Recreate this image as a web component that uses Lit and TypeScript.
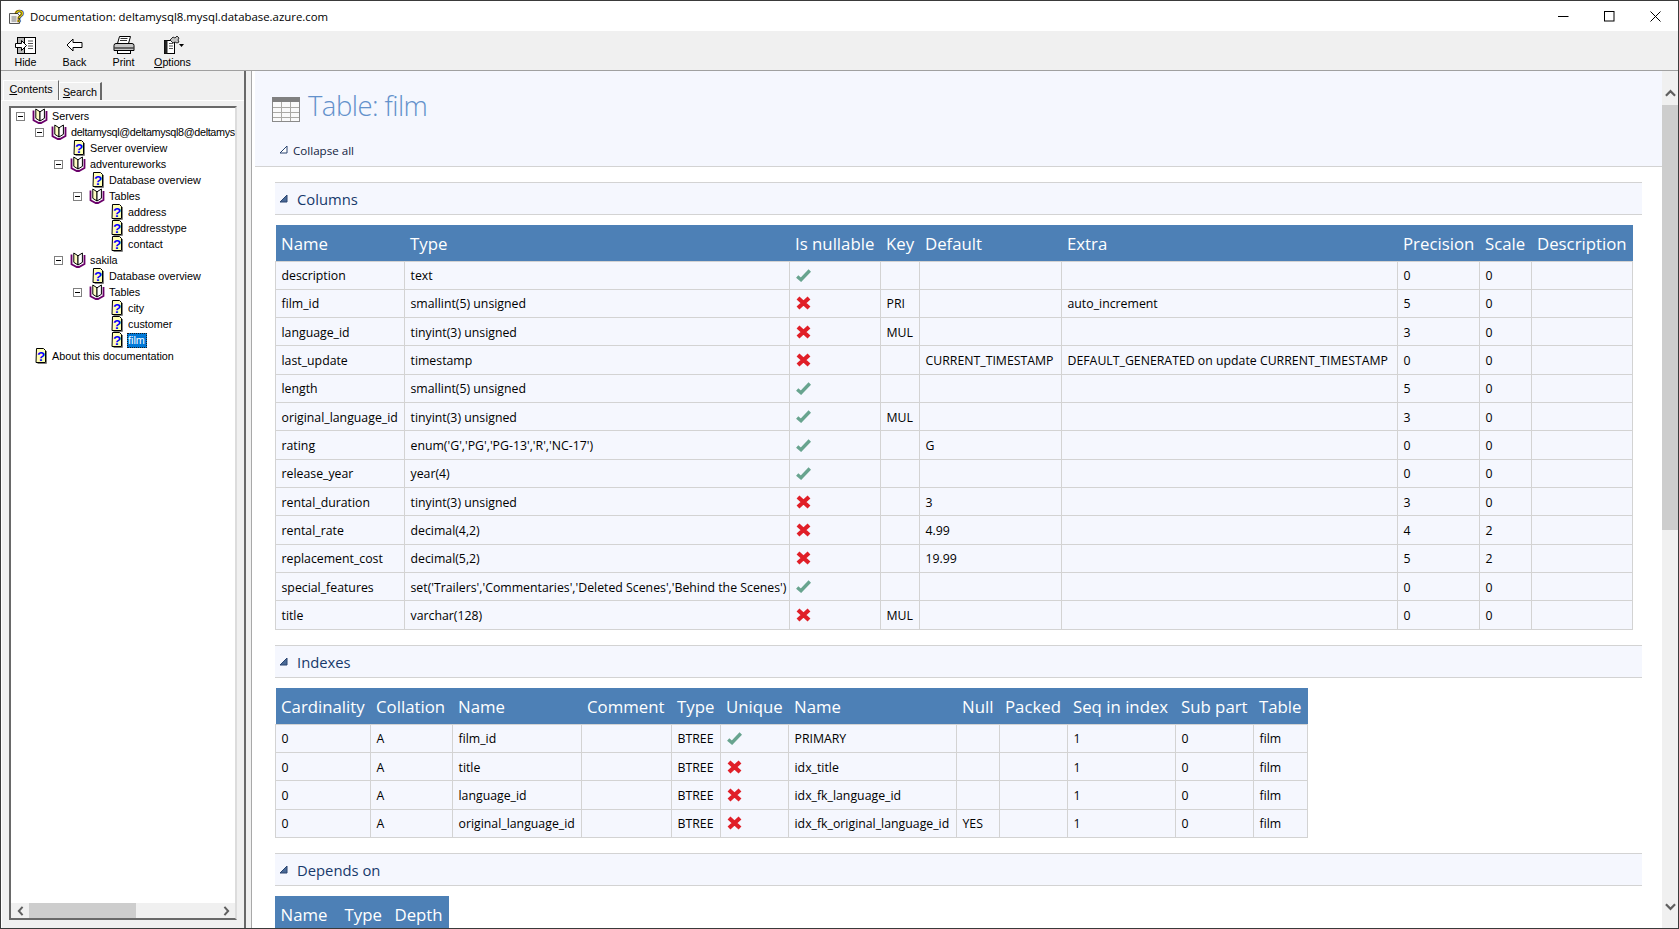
import { LitElement, html, css } from "lit";
import { customElement } from "lit/decorators.js";

const bookIcon = html`<svg class="ic16" viewBox="0 0 16 16" width="16" height="16">
  <path d="M1.500 2.500V12.200L6.800 15H9L14.500 12V3" fill="none" stroke="#6a006a" stroke-width="1.800"/>
  <path d="M3.800 1L8 3.800V13L3.800 10.300Z" fill="#ffffc4" stroke="#000" stroke-width="1"/>
  <path d="M8 3.800L12.400 1V10.300L8 13Z" fill="#fff" stroke="#000" stroke-width="1"/>
</svg>`;

const helpIcon = html`<svg class="ic16" viewBox="0 0 16 16" width="16" height="16">
  <path d="M4.500 .5h7l2 2v12h-9.500z" fill="#ffffb4" stroke="#000" stroke-width="1"/>
  <path d="M14.500 3v12.500h-9" fill="none" stroke="#808080" stroke-width="1"/>
  <text x="9" y="12.500" text-anchor="middle" font-family="Liberation Sans" font-weight="700" font-size="13.500" fill="#0000ff">?</text>
</svg>`;

const expander = html`<svg class="exp" viewBox="0 0 9 9" width="9" height="9">
  <rect x=".5" y=".5" width="8" height="8" fill="#fff" stroke="#808080"/>
  <path d="M2 4.500h5" stroke="#000" stroke-width="1"/>
</svg>`;

const check = html`<svg class="state" viewBox="0 0 15 13" width="15" height="13">
  <path d="M1.200 7.500l3.800 3.200 8.800-9.200" fill="none" stroke="#68a48f" stroke-width="3.400"/>
</svg>`;

const cross = html`<svg class="state" viewBox="0 0 15 14" width="15" height="14">
  <path d="M2 2l11 10M13 2l-11 10" fill="none" stroke="#e01f28" stroke-width="4.200"/>
</svg>`;

const chevron = (d: string) => html`<svg class="chev" viewBox="0 0 12 8" width="11" height="8"><path d=${d} fill="none" stroke="#606060" stroke-width="2.400"/></svg>`;
const chevronSide = (d: string) => html`<svg class="chev" viewBox="0 0 8 12" width="7" height="10"><path d=${d} fill="none" stroke="#606060" stroke-width="2.400"/></svg>`;

const tri = (fill: string) => html`<svg class="tri" viewBox="0 0 9 9" width="9" height="9"><path d="M8 1v7H1z" fill=${fill} stroke="#2a4570" stroke-width="1"/></svg>`;

const treeRows: [number, string, string, boolean?][] = [
  [0, "book", "Servers"],
  [1, "book", "deltamysql@deltamysql8@deltamys"],
  [2, "help", "Server overview"],
  [2, "book", "adventureworks"],
  [3, "help", "Database overview"],
  [3, "book", "Tables"],
  [4, "help", "address"],
  [4, "help", "addresstype"],
  [4, "help", "contact"],
  [2, "book", "sakila"],
  [3, "help", "Database overview"],
  [3, "book", "Tables"],
  [4, "help", "city"],
  [4, "help", "customer"],
  [4, "help", "film", true],
  [0, "help", "About this documentation"],
];

const colWidths = [129, 385, 91, 39, 142, 336, 82, 52, 101];
const colHead = ["Name", "Type", "Is nullable", "Key", "Default", "Extra", "Precision", "Scale", "Description"];
const colRows: (string | boolean)[][] = [
  ["description", "text", true, "", "", "", "0", "0", ""],
  ["film_id", "smallint(5) unsigned", false, "PRI", "", "auto_increment", "5", "0", ""],
  ["language_id", "tinyint(3) unsigned", false, "MUL", "", "", "3", "0", ""],
  ["last_update", "timestamp", false, "", "CURRENT_TIMESTAMP", "DEFAULT_GENERATED on update CURRENT_TIMESTAMP", "0", "0", ""],
  ["length", "smallint(5) unsigned", true, "", "", "", "5", "0", ""],
  ["original_language_id", "tinyint(3) unsigned", true, "MUL", "", "", "3", "0", ""],
  ["rating", "enum('G','PG','PG-13','R','NC-17')", true, "", "G", "", "0", "0", ""],
  ["release_year", "year(4)", true, "", "", "", "0", "0", ""],
  ["rental_duration", "tinyint(3) unsigned", false, "", "3", "", "3", "0", ""],
  ["rental_rate", "decimal(4,2)", false, "", "4.99", "", "4", "2", ""],
  ["replacement_cost", "decimal(5,2)", false, "", "19.99", "", "5", "2", ""],
  ["special_features", "set('Trailers','Commentaries','Deleted Scenes','Behind the Scenes')", true, "", "", "", "0", "0", ""],
  ["title", "varchar(128)", false, "MUL", "", "", "0", "0", ""],
];

const idxWidths = [95, 82, 129, 90, 49, 68, 168, 43, 68, 108, 78, 54];
const idxHead = ["Cardinality", "Collation", "Name", "Comment", "Type", "Unique", "Name", "Null", "Packed", "Seq in index", "Sub part", "Table"];
const idxRows: (string | boolean)[][] = [
  ["0", "A", "film_id", "", "BTREE", true, "PRIMARY", "", "", "1", "0", "film"],
  ["0", "A", "title", "", "BTREE", false, "idx_title", "", "", "1", "0", "film"],
  ["0", "A", "language_id", "", "BTREE", false, "idx_fk_language_id", "", "", "1", "0", "film"],
  ["0", "A", "original_language_id", "", "BTREE", false, "idx_fk_original_language_id", "YES", "", "1", "0", "film"],
];

const depWidths = [64, 50, 60];
const depHead = ["Name", "Type", "Depth"];

@customElement("app-root")
export class AppRoot extends LitElement {
  static styles = css`
    :host {
      display: flex;
      flex-direction: column;
      box-sizing: border-box;
      width: 1679px;
      height: 929px;
      overflow: hidden;
      border: 1px solid #3a3a3a;
      background: #fff;
      font-family: "Open Sans", "Liberation Sans", sans-serif;
    }
    .titlebar {
      flex: none;
      height: 30px;
      display: flex;
      align-items: center;
      background: #fff;
    }
    .app-ic { margin-left: 7px; flex: none; }
    .title-text {
      margin-left: 4px;
      font-size: 11.4px;
      color: #000;
      flex: 1;
    }
    .winbtn { flex: none; display: block; margin-right: 35px; }
    .winbtn:last-child { margin-right: 17px; }
    .toolbar {
      flex: none;
      height: 40px;
      box-sizing: border-box;
      background: #f0f0f0;
      border-bottom: 1px solid #a0a0a0;
      display: flex;
    }
    .tool {
      width: 49px;
      display: flex;
      flex-direction: column;
      align-items: center;
      font-family: "Liberation Sans", sans-serif;
      font-size: 10.7px;
      color: #000;
      padding-top: 3px;
      box-sizing: border-box;
    }
    .tool svg { display: block; height: 22px; }
    .tool span { line-height: 13px; white-space: nowrap; }
    .body { flex: 1; min-height: 0; display: flex; }
    .left {
      flex: none;
      width: 245px;
      box-sizing: border-box;
      background: #f0f0f0;
      border-right: 2px solid #696969;
      display: flex;
      flex-direction: column;
      font-family: "Liberation Sans", sans-serif;
      font-size: 10.8px;
      color: #000;
    }
    .tabs {
      flex: none;
      height: 20px;
      margin-top: 9px;
      padding-left: 2px;
      display: flex;
      align-items: flex-end;
    }
    .tab {
      box-sizing: border-box;
      display: flex;
      align-items: center;
      justify-content: center;
      background: #f0f0f0;
      border-top: 1px solid #fff;
      border-left: 1px solid #fff;
      border-right: 1px solid #696969;
      font-size: 10.8px;
    }
    .tab.on { width: 56px; height: 20px; padding-bottom: 3px; }
    .tab.off { width: 43px; height: 18px; border-right-width: 2px; }
    .tabpanel {
      flex: 1;
      min-height: 0;
      box-sizing: border-box;
      border-top: 1px solid #fff;
      border-left: 1px solid #fff;
      padding: 5px 7px 8px 7px;
      display: flex;
      flex-direction: column;
    }
    .treebox {
      flex: 1;
      min-height: 0;
      display: flex;
      flex-direction: column;
      background: #fff;
      border-top: 2px solid #696969;
      border-left: 2px solid #696969;
      border-right: 2px solid #dcdcdc;
      border-bottom: 2px solid #696969;
      box-sizing: border-box;
      overflow: hidden;
    }
    .tree { flex: 1; min-height: 0; overflow: hidden; }
    .row {
      height: 16px;
      display: flex;
      align-items: center;
      white-space: nowrap;
    }
    .slot { flex: none; width: 16px; height: 16px; display: flex; align-items: center; }
    .exp { display: block; }
    .ic16 { display: block; flex: none; }
    .label { margin-left: 4px; line-height: 14px; padding: 0 1px 0 0; }
    .label.tight { letter-spacing: -0.34px; }
    .label.sel {
      margin-left: 3px;
      padding: 0 2px 0 1px;
      height: 15px;
      background: #0078d7;
      color: #fff;
      outline: 1px dotted #1b1b1b;
      outline-offset: -1px;
    }
    .hscroll {
      flex: none;
      height: 15px;
      background: #f0f0f0;
      display: flex;
      align-items: center;
    }
    .hscroll .btn { width: 18px; flex: none; display: flex; justify-content: center; }
    .hscroll .thumb { width: 107px; height: 15px; background: #cdcdcd; flex: none; }
    .hscroll .sp { flex: 1; }
    .splitter {
      flex: none;
      width: 5px;
      background: #f0f0f0;
      border-right: 1px solid #a8a8a8;
      box-sizing: content-box;
    }
    .main {
      flex: 1;
      min-width: 0;
      background: #fff;
      display: flex;
      overflow: hidden;
    }
    .page {
      flex: 1;
      min-width: 0;
      margin-left: 3px;
      overflow: hidden;
      color: #000;
    }
    .head {
      height: 96px;
      box-sizing: border-box;
      background: #f5f7fe;
      border-bottom: 1.5px solid #d3d3d3;
      padding: 24px 0 0 17px;
    }
    .head-title { display: flex; align-items: center; height: 28px; }
    .head-title svg { display: block; flex: none; }
    .head-title h1 {
      margin: 0 0 7px 8px;
      font-size: 27.5px;
      font-weight: 300;
      color: #6391cb;
      letter-spacing: -0.55px;
      line-height: 28px;
    }
    .collapse {
      margin-top: 18px;
      padding-left: 7px;
      display: flex;
      align-items: center;
      font-size: 11.6px;
      color: #13243f;
      line-height: 16px;
    }
    .tri { display: block; flex: none; }
    .collapse .tri { margin-bottom: 1px; }
    .collapse span { margin-left: 5px; padding-top: 2px; }
    .sec {
      margin: 15.5px 20px 0 20px;
      height: 33px;
      box-sizing: border-box;
      background: #f5f7fe;
      border-top: 1.5px solid #d3d3d3;
      border-bottom: 1.5px solid #d3d3d3;
      display: flex;
      align-items: center;
      padding-left: 4px;
      font-size: 14.8px;
      color: #17396b;
    }
    .sec span { margin-left: 9px; padding-top: 1px; }
    .sec.first { margin-top: 15px; }
    table {
      margin: 9.5px 0 0 20px;
      border-collapse: collapse;
      table-layout: fixed;
    }
    th {
      height: 34px;
      padding: 2px 0 0 5.500px;
      background: #4d80b6;
      color: #fff;
      font-size: 16.8px;
      font-weight: 400;
      text-align: left;
      white-space: nowrap;
      overflow: hidden;
    }
    td {
      height: 26.32px;
      padding: 1px 0 0 5.500px;
      background: #f5f7fe;
      border: 1px solid #d3d3d3;
      font-size: 12.3px;
      white-space: nowrap;
      overflow: hidden;
    }
    .state { display: block; margin-top: -1px; }
    .scroll {
      flex: none;
      width: 16px;
      background: #f0f0f0;
      display: flex;
      flex-direction: column;
      align-items: center;
    }
    .scroll .up { height: 34px; flex: none; box-sizing: border-box; padding-top: 18px; }
    .scroll .thumb { width: 16px; height: 425px; background: #cdcdcd; flex: none; }
    .scroll .sp { flex: 1; }
    .scroll .down { flex: none; padding-bottom: 17px; }
    .chev { display: block; }
  `;

  private tree() {
    return treeRows.map(([d, kind, text, sel]) => {
      const hasExp = kind === "book";
      const tight = text.includes("@");
      return html`<div class="row" style="padding-left:${5 + 19 * d}px">
        <div class="slot">${hasExp ? expander : ""}</div>
        ${hasExp ? bookIcon : helpIcon}
        <span class="label ${sel ? "sel" : ""} ${tight ? "tight" : ""}">${text}</span>
      </div>`;
    });
  }

  private table(widths: number[], head: string[], rows: (string | boolean)[][]) {
    const total = widths.reduce((a, b) => a + b, 0);
    return html`<table style="width:${total}px">
      <colgroup>${widths.map((w) => html`<col style="width:${w}px" />`)}</colgroup>
      <thead><tr>${head.map((h) => html`<th>${h}</th>`)}</tr></thead>
      <tbody>
        ${rows.map(
          (r) => html`<tr>${r.map((c) => html`<td>${c === true ? check : c === false ? cross : c}</td>`)}</tr>`
        )}
      </tbody>
    </table>`;
  }

  render() {
    return html`
      <div class="titlebar">
        <svg class="app-ic" width="18" height="20" viewBox="0 0 18 20">
          <path d="M1.500 7.500h8l2 2v8h-10z" fill="#f4f4f4" stroke="#555"/>
          <path d="M3.500 11h5M3.500 13h5M3.500 15h5" stroke="#777"/>
          <text x="11.500" y="16" text-anchor="middle" font-family="Liberation Sans" font-weight="700" font-size="16" fill="#f5d800" stroke="#222" stroke-width=".7">?</text>
        </svg>
        <div class="title-text">Documentation: deltamysql8.mysql.database.azure.com</div>
        <svg class="winbtn" width="11" height="11" viewBox="0 0 11 11"><path d="M0 5.500h10.500" stroke="#000"/></svg>
        <svg class="winbtn" width="11" height="11" viewBox="0 0 11 11"><rect x=".5" y=".5" width="9.500" height="9.500" fill="none" stroke="#000"/></svg>
        <svg class="winbtn" width="11" height="11" viewBox="0 0 11 11"><path d="M.5 .5l10 10M10.500 .5l-10 10" stroke="#000" fill="none"/></svg>
      </div>
      <div class="toolbar">
        <div class="tool">
          <svg width="22" height="22" viewBox="0 0 22 22">
            <rect x="2.500" y="3.500" width="18" height="16" fill="#fff" stroke="#000"/>
            <rect x="2.500" y="3.500" width="7" height="16" fill="#b8b8b8" stroke="#000"/>
            <path d="M.5 9.500h6v-3l5 5-5 5v-3h-6z" fill="#fff" stroke="#000"/>
            <path d="M13 7h5M13 9.500h5M13 12h5M13 14.500h5" stroke="#555"/>
          </svg>
          <span>Hide</span>
        </div>
        <div class="tool">
          <svg width="22" height="22" viewBox="0 0 22 22">
            <path d="M3 11l6-6v3.500h9v5H9V17z" fill="#fff" stroke="#000"/>
          </svg>
          <span>Back</span>
        </div>
        <div class="tool">
          <svg width="22" height="22" viewBox="0 0 22 22">
            <path d="M6.500 2.500h11l-2 7h-11z" fill="#fff" stroke="#000"/>
            <path d="M7.500 4.500h7M7 6.500h7" stroke="#333"/>
            <path d="M3 9.500h16a2 2 0 012 2v5H1v-5a2 2 0 012-2z" fill="#c8c8c8" stroke="#000"/>
            <path d="M1.500 14h19" stroke="#000"/>
            <rect x="4.500" y="16.500" width="13" height="3" fill="#fff" stroke="#000"/>
          </svg>
          <span>Print</span>
        </div>
        <div class="tool">
          <svg width="24" height="22" viewBox="0 0 24 22">
            <rect x="3.500" y="6.500" width="10" height="13" fill="#fff" stroke="#000"/>
            <rect x="3.500" y="6.500" width="3" height="13" fill="#222"/>
            <path d="M8 9.500h4M8 12h4M8 14.500h4" stroke="#555"/>
            <path d="M9 6l3-3 2 1 2-2 2 2-1 2 1 2-2 1-2-1-2 1z" fill="#c0c0c0" stroke="#000" stroke-width=".8"/>
            <path d="M18 10h5l-2.500 3z" fill="#000"/>
          </svg>
          <span><u>O</u>ptions</span>
        </div>
      </div>
      <div class="body">
        <div class="left">
          <div class="tabs">
            <div class="tab on"><span><u>C</u>ontents</span></div>
            <div class="tab off"><span><u>S</u>earch</span></div>
          </div>
          <div class="tabpanel">
            <div class="treebox">
              <div class="tree">${this.tree()}</div>
              <div class="hscroll">
                <div class="btn">${chevronSide("M6.500 1L2 6l4.500 5")}</div>
                <div class="thumb"></div>
                <div class="sp"></div>
                <div class="btn">${chevronSide("M1.500 1L6 6l-4.500 5")}</div>
              </div>
            </div>
          </div>
        </div>
        <div class="splitter"></div>
        <div class="main">
          <div class="page">
            <div class="head">
              <div class="head-title">
                <svg width="28" height="25" viewBox="0 0 28 25">
                  <rect x=".5" y=".5" width="27" height="24" fill="#fafafa" stroke="#8a8a8a"/>
                  <rect x="0" y="0" width="28" height="5" fill="#808080"/>
                  <path d="M1 10.500h26M1 15.500h26M1 20.500h26M9.500 5v19M18.500 5v19" stroke="#aaa9a5" fill="none"/>
                </svg>
                <h1>Table: film</h1>
              </div>
              <div class="collapse">${tri("#fff")}<span>Collapse all</span></div>
            </div>
            <div class="sec first">${tri("#4a6a96")}<span>Columns</span></div>
            ${this.table(colWidths, colHead, colRows)}
            <div class="sec">${tri("#4a6a96")}<span>Indexes</span></div>
            ${this.table(idxWidths, idxHead, idxRows)}
            <div class="sec">${tri("#4a6a96")}<span>Depends on</span></div>
            ${this.table(depWidths, depHead, [])}
          </div>
          <div class="scroll">
            <div class="up">${chevron("M1 7l5-5 5 5")}</div>
            <div class="thumb"></div>
            <div class="sp"></div>
            <div class="down">${chevron("M1 1l5 5 5-5")}</div>
          </div>
        </div>
      </div>
    `;
  }
}
